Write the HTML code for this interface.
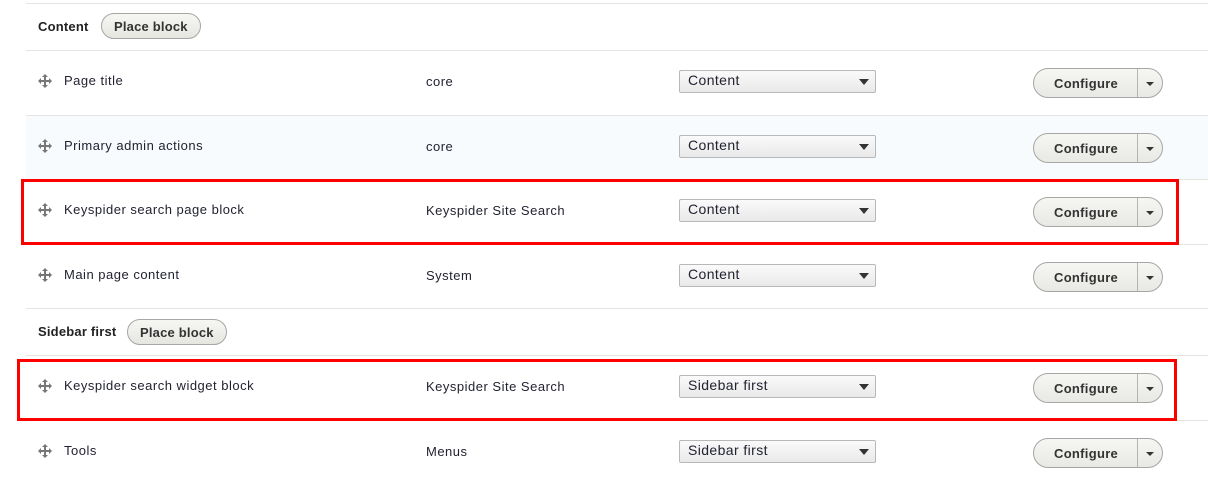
<!DOCTYPE html>
<html><head><style>
body{margin:0;width:1208px;height:484px;background:#fff;font-family:"Liberation Sans","DejaVu Sans",sans-serif;color:#222330;position:relative;overflow:hidden}
.ln{position:absolute;left:26px;right:0;height:1px;background:#e6e4df}
.row{position:absolute;left:26px;right:0}
.t{position:absolute;font-size:13px;letter-spacing:.5px}
.mv{position:absolute;left:38px}
.sel{position:absolute;left:679px;width:197px;height:23px;border:1px solid #b8b8b8;border-radius:2px;background:linear-gradient(#fafafa,#e9e9e9);box-sizing:border-box;font-size:14px;padding:1px 8px;letter-spacing:.4px}
.sel:after{content:"";position:absolute;right:6px;top:8px;border-left:5px solid transparent;border-right:5px solid transparent;border-top:6px solid #333}
.cfg{position:absolute;left:1033px;width:130px;height:30px;border:1px solid #a6a6a6;border-radius:15px;background:linear-gradient(#f6f6f3,#e8e8e4);box-sizing:border-box;font-size:13px;font-weight:bold;color:#333;letter-spacing:.3px}
.cfg span{position:absolute;left:20px;top:7px}
.cfg i{position:absolute;left:103px;top:0;bottom:0;border-left:1px solid #b4b4b4}
.cfg b{position:absolute;left:112px;top:13px;border-left:4px solid transparent;border-right:4px solid transparent;border-top:4px solid #333}
.pb{position:absolute;height:26px;border:1px solid #a6a6a6;border-radius:13px;background:linear-gradient(#f6f6f3,#e6e6e1);box-sizing:border-box;font-size:13px;font-weight:bold;padding:5px 12px;color:#333;letter-spacing:.2px}
.h{position:absolute;font-size:13px;font-weight:bold;color:#222;letter-spacing:.2px}
.red{position:absolute;border:3px solid #f00;box-sizing:border-box}
</style></head><body>
<div class="ln" style="top:3px"></div>
<div class="h" style="left:38px;top:19px">Content</div>
<div class="pb" style="left:101px;top:13px">Place block</div>
<div class="ln" style="top:50px"></div>
<div class="row" style="top:115px;height:64px;background:#f7fbfd"></div>
<div class="ln" style="top:115px"></div>
<div class="ln" style="top:179px"></div>
<div class="ln" style="top:244px"></div>
<div class="ln" style="top:308px"></div>
<div class="h" style="left:38px;top:324px">Sidebar first</div>
<div class="pb" style="left:127px;top:319px">Place block</div>
<div class="ln" style="top:355px"></div>
<div class="ln" style="top:420px"></div>

<svg width="0" height="0" style="position:absolute"><defs><g id="mv"><path d="M7 1v12M1 7h12" stroke="#777" stroke-width="2"/><path d="M7 0l-3 3h6zM7 14l-3-3h6zM0 7l3-3v6zM14 7l-3-3v6z" fill="#777"/></g></defs></svg>

<svg class="mv" style="top:74px" width="14" height="14"><use href="#mv"/></svg>
<div class="t" style="left:64px;top:73px">Page title</div>
<div class="t" style="left:426px;top:74px">core</div>
<div class="sel" style="top:70px">Content</div>
<div class="cfg" style="top:68px"><span>Configure</span><i></i><b></b></div>

<svg class="mv" style="top:139px" width="14" height="14"><use href="#mv"/></svg>
<div class="t" style="left:64px;top:138px">Primary admin actions</div>
<div class="t" style="left:426px;top:139px">core</div>
<div class="sel" style="top:135px">Content</div>
<div class="cfg" style="top:133px"><span>Configure</span><i></i><b></b></div>

<svg class="mv" style="top:203px" width="14" height="14"><use href="#mv"/></svg>
<div class="t" style="left:64px;top:202px">Keyspider search page block</div>
<div class="t" style="left:426px;top:203px">Keyspider Site Search</div>
<div class="sel" style="top:199px">Content</div>
<div class="cfg" style="top:197px"><span>Configure</span><i></i><b></b></div>

<svg class="mv" style="top:268px" width="14" height="14"><use href="#mv"/></svg>
<div class="t" style="left:64px;top:267px">Main page content</div>
<div class="t" style="left:426px;top:268px">System</div>
<div class="sel" style="top:264px">Content</div>
<div class="cfg" style="top:262px"><span>Configure</span><i></i><b></b></div>

<svg class="mv" style="top:379px" width="14" height="14"><use href="#mv"/></svg>
<div class="t" style="left:64px;top:378px">Keyspider search widget block</div>
<div class="t" style="left:426px;top:379px">Keyspider Site Search</div>
<div class="sel" style="top:375px">Sidebar first</div>
<div class="cfg" style="top:373px"><span>Configure</span><i></i><b></b></div>

<svg class="mv" style="top:444px" width="14" height="14"><use href="#mv"/></svg>
<div class="t" style="left:64px;top:443px">Tools</div>
<div class="t" style="left:426px;top:444px">Menus</div>
<div class="sel" style="top:440px">Sidebar first</div>
<div class="cfg" style="top:438px"><span>Configure</span><i></i><b></b></div>

<div class="red" style="left:21px;top:179px;width:1158px;height:66px"></div>
<div class="red" style="left:17px;top:359px;width:1160px;height:62px"></div>
</body></html>
